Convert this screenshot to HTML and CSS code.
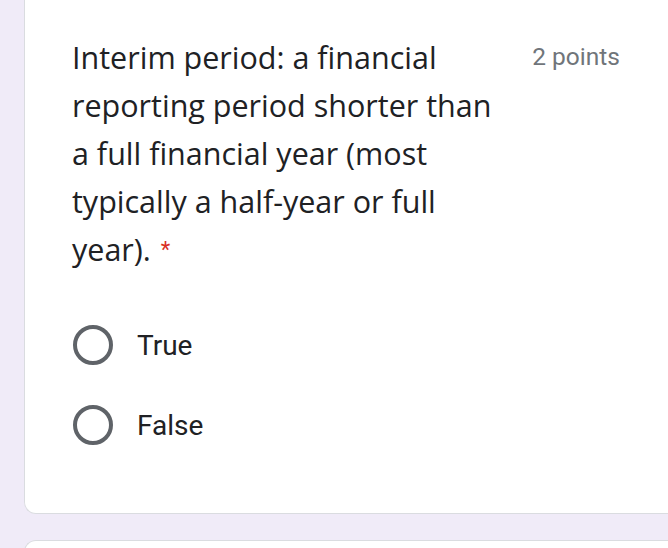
FILE: index.html
```html
<!DOCTYPE html>
<html>
<head>
<meta charset="utf-8">
<link rel="stylesheet" href="styles.css">
</head>
<body>
<div class="page">
  <div class="card">
    <div class="header">
      <div class="title">Interim period: a financial reporting period shorter than a full financial year (most typically a half-year or full year).<span class="req">*</span></div>
      <div class="points">2 points</div>
    </div>
    <div class="options">
      <div class="option"><span class="radio"></span><span class="label">True</span></div>
      <div class="option"><span class="radio"></span><span class="label">False</span></div>
    </div>
  </div>
  <div class="card next"></div>
</div>
</body>
</html>
```
FILE: styles.css
```css
html, body {
  margin: 0;
  padding: 0;
  background: #f0ebf8;
  overflow: hidden;
  width: 668px;
  height: 548px;
}
.page {
  padding-left: 24px;
  display: flex;
  flex-direction: column;
  gap: 26px;
  margin-top: -20px;
  height: 568px;
  overflow: hidden;
}
.card {
  background: #fff;
  border: 1px solid #dadce0;
  border-right: none;
  border-radius: 12px 0 0 12px;
  width: 644px;
  box-sizing: border-box;
  padding: 52px 48px 48px 47px;
  flex-shrink: 0;
}
.header {
  display: flex;
  align-items: flex-start;
}
.title {
  width: 435px;
  font-family: "Open Sans", sans-serif;
  font-size: 30.5px;
  line-height: 48px;
  color: #202124;
}
.req {
  color: #d93025;
  font-family: Roboto, sans-serif;
  font-size: 22px;
  margin-left: 10px;
  vertical-align: 4px;
}
.points {
  margin-left: auto;
  font-family: Roboto, sans-serif;
  font-size: 24.5px;
  line-height: 48px;
  color: #70757a;
  white-space: nowrap;
}
.options {
  margin-top: 31px;
  display: flex;
  flex-direction: column;
}
.option {
  height: 80px;
  display: flex;
  align-items: center;
}
.radio {
  width: 40px;
  height: 40px;
  box-sizing: border-box;
  border: 4px solid #5f6368;
  border-radius: 50%;
  margin-left: 1px;
}
.label {
  margin-left: 24px;
  font-family: Roboto, sans-serif;
  font-size: 28px;
  color: #202124;
}
.next {
  height: 40px;
  padding: 0;
}
```
